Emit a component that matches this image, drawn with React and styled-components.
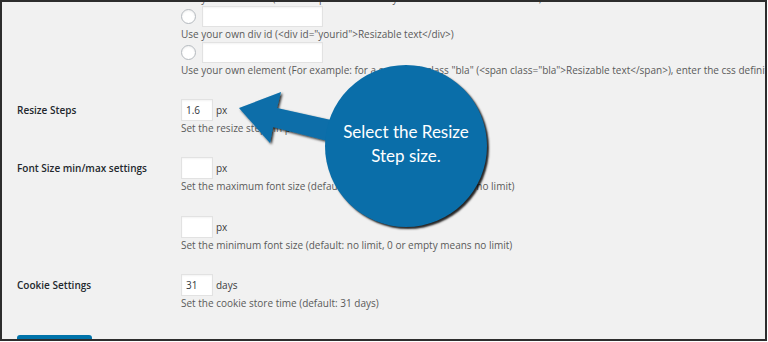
import React from "react";
import styled, { createGlobalStyle } from "styled-components";

const GlobalStyle = createGlobalStyle`
    html, body {
        margin: 0;
        padding: 0;
        background: #ffffff;
    }
`;

function App() {
    return (
        <>
            <GlobalStyle />
            <Frame>
                <Form>
                    <Row>
                        <Label />
                        <Field>
                            <Desc>Use your own class (For example: &lt;div class="yourclass"&gt;Resizable text&lt;/div&gt;)</Desc>
                            <Option>
                                <Radio />
                                <TextInput wide />
                            </Option>
                            <Desc>Use your own div id (&lt;div id="yourid"&gt;Resizable text&lt;/div&gt;)</Desc>
                            <Option>
                                <Radio />
                                <TextInput wide />
                            </Option>
                            <Desc nowrap>Use your own element (For example: for a span with class "bla" (&lt;span class="bla"&gt;Resizable text&lt;/span&gt;), enter the css definition, "span.bla" (without the quotes))</Desc>
                        </Field>
                    </Row>

                    <Row>
                        <Label>Resize Steps</Label>
                        <Field>
                            <Option>
                                <TextInput defaultValue="1.6" />
                                <Unit>px</Unit>
                            </Option>
                            <Desc>Set the resize steps in pixel (default: 1.6px)</Desc>
                        </Field>
                    </Row>

                    <Row>
                        <Label>Font Size min/max settings</Label>
                        <Field gap={22}>
                            <Group>
                                <Option>
                                    <TextInput />
                                    <Unit>px</Unit>
                                </Option>
                                <Desc>Set the maximum font size (default: no limit, 0 or empty means no limit)</Desc>
                            </Group>
                            <Group>
                                <Option>
                                    <TextInput />
                                    <Unit>px</Unit>
                                </Option>
                                <Desc>Set the minimum font size (default: no limit, 0 or empty means no limit)</Desc>
                            </Group>
                        </Field>
                    </Row>

                    <Row>
                        <Label>Cookie Settings</Label>
                        <Field>
                            <Option>
                                <TextInput defaultValue="31" />
                                <Unit>days</Unit>
                            </Option>
                            <Desc>Set the cookie store time (default: 31 days)</Desc>
                        </Field>
                    </Row>

                    <Submit>
                        <Button>Save Changes</Button>
                    </Submit>
                </Form>

                <Arrow viewBox="0 0 768 342">
                    <defs>
                        <filter id="shade" x="-20%" y="-20%" width="140%" height="140%">
                            <feDropShadow dx="1.5" dy="1.5" stdDeviation="1" floodColor="#000" floodOpacity="0.85" />
                        </filter>
                    </defs>
                    <polygon
                        points="239,108 281,92 277,108 340,122 336,143 273,127 270,143"
                        fill="#0a6ea9"
                        filter="url(#shade)"
                    />
                </Arrow>

                <Bubble>
                    Select the Resize
                    <br />
                    Step size.
                </Bubble>
            </Frame>
        </>
    );
}

export default App;

const Frame = styled.div`
    position: relative;
    width: 763px;
    height: 337px;
    border: 2px solid #2d2d2d;
    background: #f1f1f1;
    overflow: hidden;
    font-family: "Open Sans", "Liberation Sans", sans-serif;
`;

const Form = styled.div`
    display: flex;
    flex-direction: column;
    margin-top: -22px;
`;

const Row = styled.div`
    display: grid;
    grid-template-columns: 164px 1fr;
    padding: 11px 0 10px 15px;
`;

const Label = styled.div`
    font-size: 10px;
    font-weight: 600;
    color: #23282d;
    line-height: 22px;
`;

const Field = styled.div`
    display: flex;
    flex-direction: column;
    gap: ${p => p.gap || 0}px;
    min-width: 0;
`;

const Group = styled.div`
    display: flex;
    flex-direction: column;
`;

const Option = styled.div`
    display: flex;
    align-items: center;
    gap: 6px;
    height: 22px;

    &:has(> span:first-child) {
        height: 21px;
    }
`;

const Radio = styled.span`
    width: 13px;
    height: 13px;
    border-radius: 50%;
    border: 1px solid #b4b9be;
    background: #fff;
    box-shadow: inset 0 1px 2px rgba(0, 0, 0, 0.07);
    flex-shrink: 0;
`;

const TextInput = styled.input`
    box-sizing: border-box;
    width: ${p => (p.wide ? "121px" : "32px")};
    height: ${p => (p.wide ? "21px" : "22px")};
    margin: 0;
    padding: 0 4px;
    border: 1px solid #e2e2e2;
    background: #fff;
    box-shadow: inset 0 1px 2px rgba(0, 0, 0, 0.05);
    font-family: inherit;
    font-size: 10px;
    color: #32373c;
    outline: none;
`;

const Unit = styled.span`
    font-size: 10px;
    color: #3c3c3c;
    margin-left: -3px;
    font-weight: 500;
`;

const Desc = styled.div`
    font-size: 10px;
    line-height: 15px;
    color: #5a5a5a;
    white-space: ${p => (p.nowrap ? "nowrap" : "normal")};
`;

const Submit = styled.div`
    padding: 14px 0 0 15px;
`;

const Button = styled.button`
    width: 75px;
    height: 28px;
    border: none;
    border-radius: 3px;
    background: #0073aa;
    color: #fff;
    font-family: inherit;
    font-size: 10px;
`;

const Arrow = styled.svg`
    position: absolute;
    left: -2px;
    top: -2px;
    width: 768px;
    height: 342px;
    pointer-events: none;
`;

const Bubble = styled.div`
    position: absolute;
    left: 323px;
    top: 63px;
    width: 162px;
    height: 162px;
    border-radius: 50%;
    background: #0a6ea9;
    box-shadow: 2px 2px 2px rgba(0, 0, 0, 0.85);
    display: flex;
    align-items: center;
    justify-content: center;
    text-align: center;
    color: #fff;
    font-family: Lato, "Open Sans", sans-serif;
    font-size: 17px;
    line-height: 24px;
    padding-bottom: 4px;
    box-sizing: border-box;
`;
